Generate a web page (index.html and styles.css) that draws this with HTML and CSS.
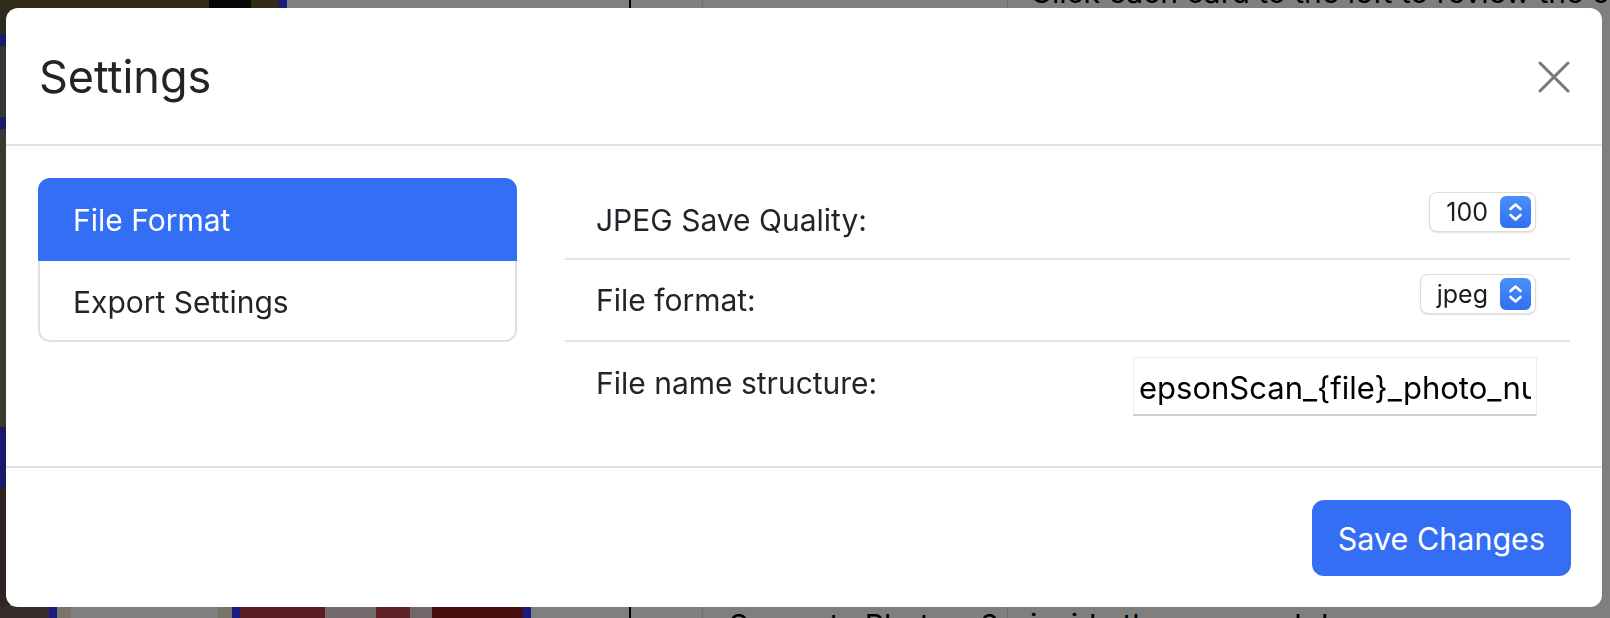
FILE: index.html
```html
<!DOCTYPE html>
<html lang="en">
<head>
<meta charset="utf-8">
<title>Settings</title>
<link rel="stylesheet" href="styles.css">
</head>
<body>
<div class="page">
  <div class="gallery">
    <div class="strip strip-top">
      <div class="photo olive"></div>
      <div class="sel"></div>
      <div class="photo blank"></div>
    </div>
    <div class="gallery-mid">
      <div class="edge"></div>
    </div>
    <div class="strip strip-bottom">
      <div class="photo dark w49"></div>
      <div class="sel"></div>
      <div class="photo beige"></div>
      <div class="sel"></div>
      <div class="photo red"></div>
      <div class="sel"></div>
      <div class="photo blank"></div>
    </div>
  </div>
  <div class="narrow-col"></div>
  <div class="info-col">
    <p class="bg-text bottom-line">Separate Photos: 3</p>
  </div>
  <div class="help-col">
    <p class="bg-text top-line">Click each card to the left to review the crops</p>
    <p class="bg-text bottom-line">inside the crop and drag.</p>
  </div>
</div>

<div class="backdrop"></div>

<div class="modal" role="dialog" aria-labelledby="settings-title">
  <div class="modal-header">
    <h2 class="modal-title" id="settings-title">Settings</h2>
    <button class="close-btn" type="button" aria-label="Close">
      <svg width="32" height="32" viewBox="0 0 32 32" aria-hidden="true">
        <path d="M2 2 L30 30 M30 2 L2 30" stroke="#777" stroke-width="3" stroke-linecap="round" fill="none"/>
      </svg>
    </button>
  </div>

  <div class="modal-body">
    <div class="nav-list">
      <div class="nav-item active">File Format</div>
      <div class="nav-item">Export Settings</div>
    </div>

    <div class="fields">
      <div class="field">
        <span class="field-label">JPEG Save Quality:</span>
        <div class="select">
          <span class="select-value">100</span>
          <span class="stepper">
            <svg width="31" height="32" viewBox="0 0 31 32" aria-hidden="true">
              <path d="M10.5 13 L15.5 8.5 L20.5 13 M10.5 19 L15.5 23.5 L20.5 19" stroke="#fff" stroke-width="2.6" stroke-linecap="round" stroke-linejoin="round" fill="none"/>
            </svg>
          </span>
        </div>
      </div>
      <div class="field">
        <span class="field-label">File format:</span>
        <div class="select">
          <span class="select-value">jpeg</span>
          <span class="stepper">
            <svg width="31" height="32" viewBox="0 0 31 32" aria-hidden="true">
              <path d="M10.5 13 L15.5 8.5 L20.5 13 M10.5 19 L15.5 23.5 L20.5 19" stroke="#fff" stroke-width="2.6" stroke-linecap="round" stroke-linejoin="round" fill="none"/>
            </svg>
          </span>
        </div>
      </div>
      <div class="field field-last">
        <span class="field-label">File name structure:</span>
        <input class="text-input" type="text" value="epsonScan_{file}_photo_number">
      </div>
    </div>
  </div>

  <div class="modal-footer">
    <button class="btn-primary" type="button">Save Changes</button>
  </div>
</div>
</body>
</html>
```

FILE: styles.css
```css
* {
  box-sizing: border-box;
}

html, body {
  margin: 0;
  padding: 0;
}

body {
  width: 1610px;
  height: 618px;
  overflow: hidden;
  font-family: Inter, "Noto Sans", "Liberation Sans", sans-serif;
  color: #212529;
  background: #fff;
}

/* ---------- background page ---------- */
.page {
  display: flex;
  width: 1610px;
  height: 618px;
  overflow: hidden;
  background: #fff;
}

.gallery {
  flex: 0 0 631px;
  display: flex;
  flex-direction: column;
  border-right: 2px solid #000;
}

.strip {
  display: flex;
}

.strip-top {
  height: 10px;
}

.strip-bottom {
  height: 12px;
}

.gallery-mid {
  flex: 1;
  display: flex;
}

.edge {
  width: 10px;
  background: linear-gradient(#5c5642 0 4%, #3434d8 4% 6%, #6a6a62 6% 18%, #3434d8 18% 20%, #77705a 20% 70%, #3434d8 70% 80%, #5a4a44 80% 100%);
}

.photo {
  height: 100%;
  flex-shrink: 0;
}

.olive {
  width: 279px;
  background: linear-gradient(90deg, #5e5a34 0 75%, #111 75% 90%, #5e5a34 90%);
}

.dark {
  background: #6a5a56;
}

.w49 {
  width: 49px;
}

.beige {
  width: 175px;
  background: linear-gradient(90deg, #f0e8d0 0 8%, #fff 8% 92%, #f0e8d0 92%);
}

.red {
  width: 283px;
  background: linear-gradient(90deg, #b43844 0 30%, #e8d8d8 30% 48%, #c04450 48% 60%, #e0d0d0 60% 68%, #8a1a1c 68%);
}

.blank {
  flex: 1;
  background: #fff;
}

.sel {
  flex: 0 0 8px;
  height: 100%;
  background: #3434ff;
}

.narrow-col {
  flex: 0 0 72px;
  border-right: 1px solid #ddd;
}

.info-col {
  flex: 0 0 305px;
  border-right: 1px solid #ddd;
  display: flex;
  flex-direction: column;
  justify-content: flex-end;
  padding-left: 26px;
  white-space: nowrap;
}

.help-col {
  flex: 1 1 auto;
  min-width: 0;
  overflow: hidden;
  display: flex;
  flex-direction: column;
  justify-content: space-between;
  padding-left: 22px;
  white-space: nowrap;
}

.bg-text {
  margin: 0;
  font-size: 30px;
  line-height: 45px;
  color: #000;
}

.top-line {
  margin-top: -30px;
}

.bottom-line {
  margin-bottom: -30px;
}

.backdrop {
  position: fixed;
  inset: 0;
  background: rgba(0, 0, 0, 0.5);
}

/* ---------- modal ---------- */
.modal {
  position: absolute;
  left: 6px;
  top: 8px;
  width: 1596px;
  height: 599px;
  background: #fff;
  border-radius: 12px;
  display: flex;
  flex-direction: column;
  overflow: hidden;
}

.modal-header {
  display: flex;
  align-items: center;
  justify-content: space-between;
  padding: 41px 32px 40px 33px;
  border-bottom: 2px solid #dee2e6;
}

.modal-title {
  margin: 0;
  font-size: 45px;
  line-height: 55px;
  font-weight: 400;
  color: #212529;
}

.close-btn {
  width: 32px;
  height: 32px;
  padding: 0;
  border: none;
  background: none;
  display: flex;
}

.modal-body {
  display: grid;
  grid-template-columns: 479px 1fr;
  column-gap: 48px;
  align-items: start;
  padding: 32px 32px 50px 32px;
  flex: 1;
}

/* list group */
.nav-list {
  display: flex;
  flex-direction: column;
}

.nav-item {
  padding: 18px 33px 16px;
  font-size: 30px;
  line-height: 45px;
  color: #212529;
  border: 2px solid #e0e0e0;
  border-top: none;
}

.nav-item.active {
  background: #346ef5;
  border: 2px solid #346ef5;
  color: #fff;
  border-radius: 12px 12px 0 0;
}

.nav-item:last-child {
  padding-top: 19px;
  padding-bottom: 15px;
  border-radius: 0 0 12px 12px;
}

/* fields */
.fields {
  display: flex;
  flex-direction: column;
}

.field {
  display: flex;
  justify-content: space-between;
  align-items: flex-start;
  height: 82px;
  padding: 14px 34px 0 31px;
  border-bottom: 2px solid #e3e3e3;
}

.field-last {
  height: 74px;
  padding-top: 15px;
  padding-right: 33px;
  border-bottom: none;
}

.field-label {
  margin-top: 6px;
  font-size: 30px;
  line-height: 45px;
  color: #212529;
}

.field + .field .field-label {
  margin-top: 4px;
}

.field-last .field-label {
  margin-top: 3px;
}

.select {
  display: flex;
  align-items: center;
  gap: 12px;
  height: 40px;
  padding: 0 4px 0 16px;
  background: #fff;
  border: 1px solid #dcdcdc;
  border-radius: 8px;
  box-shadow: 0 1px 2px rgba(0, 0, 0, 0.12);
}

.select-value {
  font-size: 25px;
  line-height: 30px;
  color: #1d1d1d;
}

.stepper {
  display: flex;
  width: 31px;
  height: 32px;
  border-radius: 6px;
  background: linear-gradient(#4a8ff9, #2f70f0);
}

.text-input {
  width: 404px;
  height: 59px;
  padding: 2px 5px 0;
  font-family: Inter, "Liberation Sans", sans-serif;
  font-size: 31px;
  color: #000;
  background: #fff;
  border: 1px solid #ececec;
  border-bottom: 2px solid #cfcfcf;
  border-radius: 0;
  outline: none;
}

/* footer */
.modal-footer {
  display: flex;
  justify-content: flex-end;
  padding: 32px 31px 31px;
  border-top: 2px solid #dee2e6;
}

.btn-primary {
  height: 76px;
  padding: 0 26px;
  font-family: Inter, "Liberation Sans", sans-serif;
  font-size: 30.5px;
  color: #fff;
  background: #346ef5;
  border: none;
  border-radius: 12px;
}
```
